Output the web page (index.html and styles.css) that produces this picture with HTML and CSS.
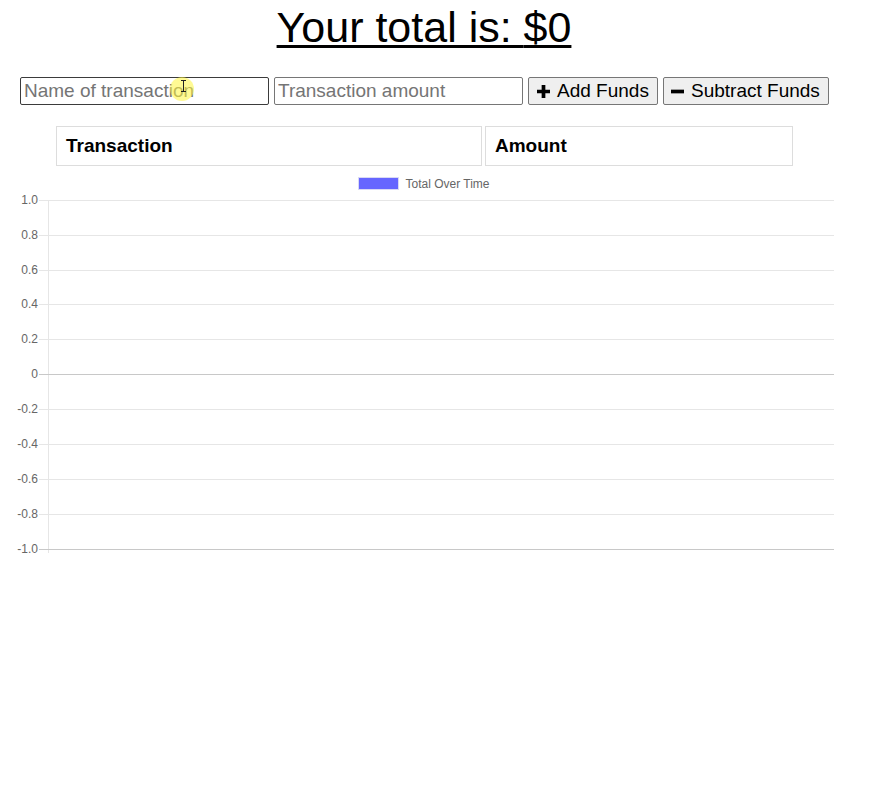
FILE: index.html
```html
<!DOCTYPE html>
<html lang="en">
<head>
<meta charset="utf-8">
<title>Budget Tracker</title>
<link rel="stylesheet" href="styles.css">
</head>
<body>
<div class="page">
  <h1 class="total">Your total is: <span class="amount">$0</span></h1>
  <form class="form-row">
    <input class="field field-focus" type="text" placeholder="Name of transaction">
    <input class="field" type="number" placeholder="Transaction amount">
    <button type="button" class="btn btn-add">
      <svg class="icon" viewBox="0 0 14 14" aria-hidden="true"><path d="M5 0h4v5h5v4H9v5H5V9H0V5h5z" fill="#000"/></svg>
      <span>Add Funds</span>
    </button>
    <button type="button" class="btn btn-sub">
      <svg class="icon" viewBox="0 0 14 14" aria-hidden="true"><path d="M0 5h14v4H0z" fill="#000"/></svg>
      <span>Subtract Funds</span>
    </button>
  </form>
  <table class="tx-table">
    <thead>
      <tr><th class="col-name">Transaction</th><th class="col-amount">Amount</th></tr>
    </thead>
    <tbody></tbody>
  </table>
  <div class="legend">
    <span class="legend-box"></span>
    <span class="legend-text">Total Over Time</span>
  </div>
  <svg class="chart" width="845" height="368" viewBox="0 190 845 368">
    <g stroke="#e6e6e6" stroke-width="1" shape-rendering="crispEdges">
      <line x1="39" y1="200.5" x2="834" y2="200.5"/>
      <line x1="39" y1="235.5" x2="834" y2="235.5"/>
      <line x1="39" y1="270.5" x2="834" y2="270.5"/>
      <line x1="39" y1="304.5" x2="834" y2="304.5"/>
      <line x1="39" y1="339.5" x2="834" y2="339.5"/>
      <line x1="39" y1="409.5" x2="834" y2="409.5"/>
      <line x1="39" y1="444.5" x2="834" y2="444.5"/>
      <line x1="39" y1="479.5" x2="834" y2="479.5"/>
      <line x1="39" y1="514.5" x2="834" y2="514.5"/>
      <line x1="48.5" y1="200" x2="48.5" y2="553"/>
    </g>
    <g stroke="#c8c8c8" stroke-width="1" shape-rendering="crispEdges">
      <line x1="39" y1="374.5" x2="834" y2="374.5"/>
      <line x1="39" y1="549.5" x2="834" y2="549.5"/>
    </g>
    <g class="ticks" fill="#666" font-family="'Liberation Sans', Arial, sans-serif" font-size="12" text-anchor="end">
      <text x="38" y="204">1.0</text>
      <text x="38" y="239">0.8</text>
      <text x="38" y="274">0.6</text>
      <text x="38" y="308">0.4</text>
      <text x="38" y="343">0.2</text>
      <text x="38" y="378">0</text>
      <text x="38" y="413">-0.2</text>
      <text x="38" y="448">-0.4</text>
      <text x="38" y="483">-0.6</text>
      <text x="38" y="518">-0.8</text>
      <text x="38" y="553">-1.0</text>
    </g>
  </svg>
</div>
<div class="cursor-halo" aria-hidden="true">
  <svg class="ibeam" viewBox="0 0 7 12" width="7" height="12"><path d="M1 .5h5M3.5.5v11M1 11.5h5" stroke="#222" stroke-width="1" fill="none"/></svg>
</div>
</body>
</html>
```
FILE: styles.css
```css
html, body {
  margin: 0;
  padding: 0;
  background: #fff;
}
body {
  font-family: "Liberation Sans", Arial, sans-serif;
  color: #000;
}
.page {
  position: relative;
}
.total {
  width: 808px;
  margin: 3px 0 0 20px;
  font-size: 43px;
  font-weight: 400;
  line-height: 48px;
  text-align: center;
  text-decoration: underline;
  text-decoration-thickness: 3px;
  text-underline-offset: 3px;
}
.form-row {
  display: flex;
  gap: 5px;
  margin: 26px 0 0 20px;
  height: 28px;
}
.field {
  box-sizing: border-box;
  width: 249px;
  height: 28px;
  margin: 0;
  padding: 1px 3px;
  font-family: "Liberation Sans", Arial, sans-serif;
  font-size: 19px;
  border: 1px solid #767676;
  border-radius: 2px;
  background: #fff;
  outline: none;
}
.field-focus {
  border-color: #3b3b3b;
}
.field::placeholder {
  color: #757575;
}
.btn {
  box-sizing: border-box;
  display: flex;
  align-items: center;
  height: 28px;
  margin: 0;
  padding: 0 0 0 8px;
  font-family: "Liberation Sans", Arial, sans-serif;
  font-size: 19px;
  color: #000;
  background: #efefef;
  border: 1px solid #767676;
  border-radius: 2px;
}
.btn-add { width: 130px; }
.btn-sub { width: 166px; padding-left: 7px; }
.icon {
  width: 13px;
  height: 13px;
  margin-right: 7px;
  flex: none;
}
.tx-table {
  margin: 21px 0 0 53px;
  border-collapse: separate;
  border-spacing: 3px 0;
}
.tx-table th {
  box-sizing: border-box;
  height: 40px;
  padding: 0 9px;
  border: 1px solid #dddddd;
  text-align: left;
  font-size: 19px;
  font-weight: 700;
}
.col-name { width: 426px; }
.col-amount { width: 308px; }
.legend {
  display: flex;
  align-items: center;
  gap: 6px;
  width: 808px;
  margin: 11px 0 0 20px;
  justify-content: center;
  height: 13px;
}
.legend-box {
  box-sizing: border-box;
  width: 41px;
  height: 13px;
  background: #6666ff;
  border: 1px solid #d9d9f5;
}
.legend-text {
  font-size: 12px;
  color: #666;
}
.chart {
  display: block;
  margin-top: 0;
}
.cursor-halo {
  position: absolute;
  left: 170px;
  top: 77px;
  width: 24px;
  height: 24px;
  border-radius: 50%;
  background: rgba(255, 245, 60, 0.55);
  display: flex;
  align-items: center;
  justify-content: center;
}
.ibeam {
  margin-top: -6px;
  margin-left: 3px;
}
```
